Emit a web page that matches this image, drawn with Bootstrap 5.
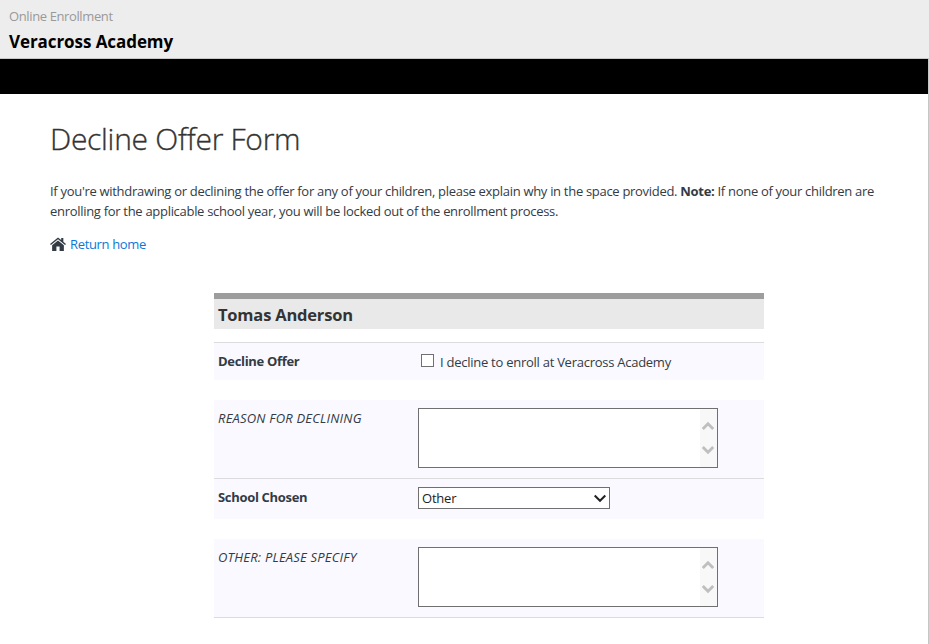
<!DOCTYPE html>
<html lang="en">
<head>
<meta charset="utf-8">
<meta name="viewport" content="width=device-width, initial-scale=1">
<title>Decline Offer Form</title>
<link rel="stylesheet" href="https://cdn.jsdelivr.net/npm/bootstrap@5.3.0/dist/css/bootstrap.min.css">
<style>
body{font-family:"Open Sans","Noto Sans",sans-serif;font-size:13px;line-height:20px;color:#333b44;background:#fff;height:644px;overflow:hidden}
.top-head{height:59px;background:#ededed;border-bottom:1px solid #c8c8c8;padding:6px 9px 0}
.app-name{font-size:13px;line-height:20px;color:#999;letter-spacing:-.38px}
.school-name{font-size:17px;line-height:24px;color:#000;margin-top:4px;letter-spacing:-.07px}
.page-main{border-right:1px solid #c6c6c6;height:585px}
.black-bar{height:35px;background:#000}
.page-body{padding:26px 50px 0}
.page-title{font-size:30px;line-height:38px;font-weight:300;color:#333;margin:0 0 23px;letter-spacing:-.27px;-webkit-text-stroke:.35px #333}
.intro{margin:0 -10px 13px 0;letter-spacing:-.3px}
.home-line{height:20px}
.home-line a{color:#0b78d8;letter-spacing:-.34px}
.home-line svg{margin-right:4px}
.offer-form{width:550px;margin:39px 0 0 164px}
.student{font-size:16.5px;line-height:24px;height:36px;border-top:6px solid #9d9d9d;background:#e9e9e9;color:#333;padding:4px 4px 0;margin:0 0 13px;letter-spacing:-.2px}
.field-row{background:#f9f9ff;padding:0 4px}
.ruled-top{border-top:1px solid #dcdcdf}
.ruled-bottom{border-bottom:1px solid #dcdcdf}
.h-check{height:38px;margin-bottom:20px}
.h-area{height:79px}
.h-select{height:40px;margin-bottom:20px}
.field-label{width:200px;padding-top:8px;flex:none}
.field-label.fw-bold{letter-spacing:-.32px}
.field-label.fst-italic{letter-spacing:.2px}
.tick{appearance:none;width:13px;height:13px;border:1px solid #707070;background:#fff;margin:3px 6px 0 3px;border-radius:0}
.tick-text{letter-spacing:-.26px;padding-top:1px}
.area-box{width:300px;height:60px;border:1px solid #707070;background:#fff;margin-top:8px}
.area-box textarea{resize:none;outline:0;border:0;min-width:0}
.scroll-strip{width:17px;background:#f8f8f8;padding:12px 1px 12px 0}
.select-box{width:192px;height:22px;margin-top:8px;border:1px solid #707070;background:#fff;color:#222}
.select-box select{appearance:none;border:0;background:transparent;padding:0 3px;outline:0;color:inherit;font:inherit;letter-spacing:-.2px}
.select-box svg{margin-right:3px}
</style>
<script src="https://cdn.jsdelivr.net/npm/bootstrap@5.3.0/dist/js/bootstrap.bundle.min.js"></script>
</head>
<body>
<header class="top-head">
  <div class="app-name"><span>Online Enrollment</span></div>
  <div class="school-name fw-bold"><span>Veracross Academy</span></div>
</header>
<main class="page-main">
  <div class="black-bar"></div>
  <div class="page-body">
    <h1 class="page-title">Decline Offer Form</h1>
    <p class="intro"><span class="text-nowrap">If you're withdrawing or declining the offer for any of your children, please explain why in the space provided. <b>Note:</b> If none of your children are</span><br><span>enrolling for the applicable school year, you will be locked out of the enrollment process.</span></p>
    <div class="home-line d-flex align-items-center">
      <svg width="16" height="14" viewBox="0 0 15 14" preserveAspectRatio="none" fill="#333b44"><path d="M7.5.4 10.5 3V1h2v3.8L15 7.1l-.9 1L7.5 2.300.9 8.100 0 7.100z"/><path d="M7.500 3.500 13 8.300V14H9V9.500H6V14H2V8.300z"/></svg>
      <a href="#" class="text-decoration-none">Return home</a>
    </div>
    <form class="offer-form">
      <h2 class="student fw-bold"><span>Tomas Anderson</span></h2>
      <div class="field-row ruled-top h-check d-flex">
        <label class="field-label fw-bold" for="decline">Decline Offer</label>
        <div class="d-flex pt-2"><input class="tick" type="checkbox" id="decline"><label class="tick-text" for="decline">I decline to enroll at Veracross Academy</label></div>
      </div>
      <div class="field-row ruled-bottom h-area d-flex">
        <label class="field-label fst-italic" for="reason">REASON FOR DECLINING</label>
        <div class="area-box d-flex"><textarea class="flex-grow-1" id="reason"></textarea>
          <div class="scroll-strip d-flex flex-column justify-content-between align-items-center"><svg width="12" height="10" viewBox="0 0 12 10" fill="none" stroke="#bfbfbf" stroke-width="2.800"><path d="M.8 8 6 2.800 11.200 8"/></svg><svg width="12" height="10" viewBox="0 0 12 10" fill="none" stroke="#bfbfbf" stroke-width="2.800"><path d="M.8 2 6 7.200 11.200 2"/></svg></div>
        </div>
      </div>
      <div class="field-row h-select d-flex">
        <label class="field-label fw-bold" for="school">School Chosen</label>
        <div class="select-box d-flex align-items-center"><select class="flex-grow-1" id="school"><option>Other</option></select><svg width="12" height="9" viewBox="0 0 12 9" fill="none" stroke="#222" stroke-width="2"><path d="M.7 1.500 6 6.800 11.300 1.500"/></svg></div>
      </div>
      <div class="field-row ruled-bottom h-area d-flex">
        <label class="field-label fst-italic" for="other">OTHER: PLEASE SPECIFY</label>
        <div class="area-box d-flex"><textarea class="flex-grow-1" id="other"></textarea>
          <div class="scroll-strip d-flex flex-column justify-content-between align-items-center"><svg width="12" height="10" viewBox="0 0 12 10" fill="none" stroke="#bfbfbf" stroke-width="2.800"><path d="M.8 8 6 2.800 11.200 8"/></svg><svg width="12" height="10" viewBox="0 0 12 10" fill="none" stroke="#bfbfbf" stroke-width="2.800"><path d="M.8 2 6 7.200 11.200 2"/></svg></div>
        </div>
      </div>
    </form>
  </div>
</main>
</body>
</html>
